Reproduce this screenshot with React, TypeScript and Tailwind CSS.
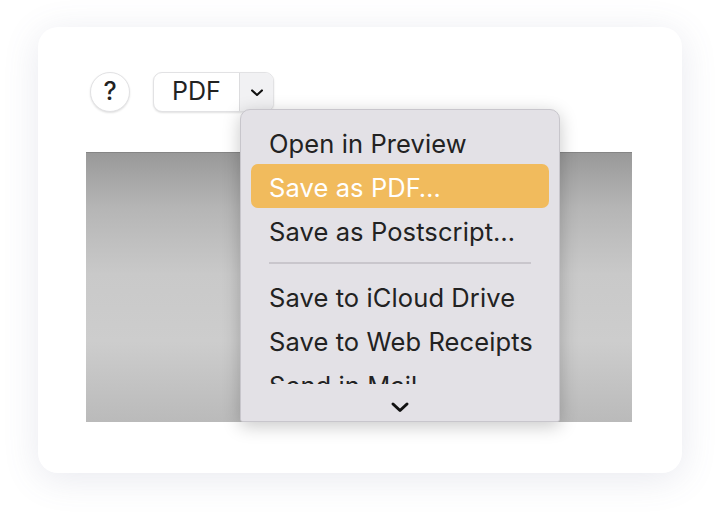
const font = { fontFamily: "Inter, 'Noto Sans', sans-serif" };

function Chevron({ className }: { className: string }) {
  return (
    <svg viewBox="0 0 20 12" fill="none" className={className}>
      <path d="M3 3l7 6.5L17 3" stroke="currentColor" strokeWidth="3" strokeLinecap="round" strokeLinejoin="round" />
    </svg>
  );
}

const items = ["Open in Preview", "Save as PDF…", "Save as Postscript…"];
const moreItems = ["Save to iCloud Drive", "Save to Web Receipts", "Send in Mail"];

export default function App() {
  return (
    <div className="min-h-[522px] w-[720px] bg-white pl-[38px] pt-[27px]" style={font}>
      <div className="relative flex h-[446px] w-[644px] flex-col rounded-[20px] bg-white pl-[48px] pr-[50px] pt-[45px] shadow-[0_6px_36px_rgba(90,100,140,0.14)]">
        <div className="flex h-10 items-center gap-[23px] pl-1">
          <button className="flex h-10 w-10 items-center justify-center rounded-full border border-[#e2e2e4] bg-white text-[25px] font-medium text-[#222] shadow-[0_1px_2px_rgba(0,0,0,0.12)]">
            ?
          </button>
          <div className="flex h-10 w-[121px] overflow-hidden rounded-[9px] border border-[#e2e2e4] bg-white shadow-[0_1px_2px_rgba(0,0,0,0.12)]">
            <span className="flex w-[85px] items-center justify-center text-[25px] text-[#222]">PDF</span>
            <span className="flex flex-1 items-center justify-center border-l border-[#dcdcde] bg-[#f1f1f3] text-[#111]">
              <Chevron className="h-[9px] w-[14px]" />
            </span>
          </div>
        </div>
        <div className="mt-10 h-[270px] border-t border-[#858585] bg-[linear-gradient(to_bottom,#999_0%,#b5b5b5_20%,#c9c9c9_45%,#cdcdcd_70%,#bababa_100%)]" />

        <div className="absolute left-[202px] top-[82px] flex h-[313px] w-[320px] flex-col overflow-hidden rounded-t-[10px] rounded-b-[3px] border border-[#c8c6cc] bg-[#e3e1e6] px-[10px] pt-[10px] shadow-[0_4px_18px_rgba(0,0,0,0.22)]">
          {items.map((label, i) => (
            <div
              key={label}
              className={
                i === 1
                  ? "flex h-[44px] shrink-0 items-center rounded-[7px] bg-[#f1bb5d] pl-[18px] pt-[4px] text-[25.5px] tracking-[0.1px] text-white"
                  : "flex h-[44px] shrink-0 items-center pl-[18px] pt-[4px] text-[25.5px] tracking-[0.1px] text-[#222]"
              }
            >
              {label}
            </div>
          ))}
          <div className="mx-[18px] my-[10px] h-[2px] shrink-0 bg-[#c9c6cc]" />
          {moreItems.map((label) => (
            <div key={label} className="flex h-[44px] shrink-0 items-center pl-[18px] pt-[4px] text-[25.5px] tracking-[0.1px] text-[#222]">
              {label}
            </div>
          ))}
          <div className="absolute bottom-0 left-0 right-0 flex h-[37px] items-start justify-center bg-[#e3e1e6] pt-[17px] text-[#111]">
            <Chevron className="h-[12px] w-[20px]" />
          </div>
        </div>
      </div>
    </div>
  );
}
